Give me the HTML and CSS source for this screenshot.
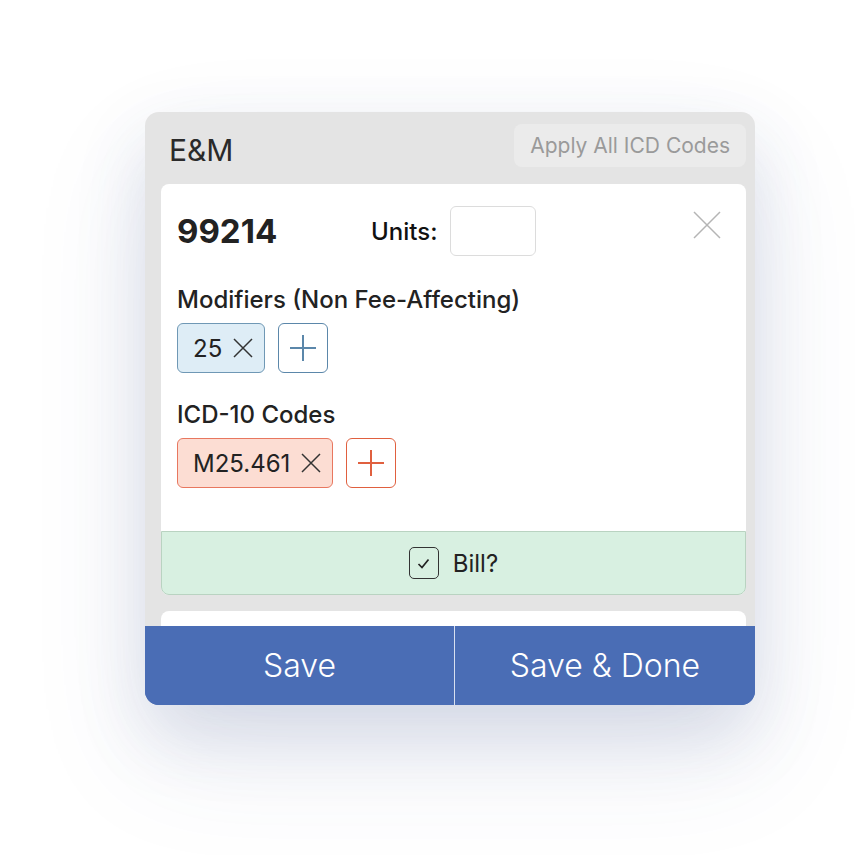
FILE: index.html
```html
<!DOCTYPE html>
<html lang="en">
<head>
<meta charset="UTF-8">
<meta name="viewport" content="width=device-width, initial-scale=1.0">
<title>E&amp;M Codes</title>
<link rel="stylesheet" href="styles.css">
</head>
<body>
<div class="panel">
    <div class="panel-header">
        <span class="panel-title">E&amp;M</span>
        <button class="apply-btn">Apply All ICD Codes</button>
    </div>
    <div class="panel-body">
        <div class="code-card">
            <div class="card-main">
                <div class="top-row">
                    <span class="code">99214</span>
                    <span class="units-label">Units:</span>
                    <input type="text" class="units-input">
                    <button class="close-btn">
                        <svg width="28" height="28" viewBox="0 0 28 28"><path d="M1 1 L27 27 M27 1 L1 27" stroke="#b5b5b5" stroke-width="1.5" fill="none"/></svg>
                    </button>
                </div>
                <div class="section-label">Modifiers (Non Fee-Affecting)</div>
                <div class="chips">
                    <span class="chip chip-blue">25
                        <svg width="20" height="20" viewBox="0 0 20 20"><path d="M1 1 L19 19 M19 1 L1 19" stroke="#333" stroke-width="1.5" fill="none"/></svg>
                    </span>
                    <button class="add-btn add-blue">
                        <svg width="26" height="26" viewBox="0 0 26 26"><path d="M13 0 V26 M0 13 H26" stroke="#5b87aa" stroke-width="2" fill="none"/></svg>
                    </button>
                </div>
                <div class="section-label">ICD-10 Codes</div>
                <div class="chips">
                    <span class="chip chip-red">M25.461
                        <svg width="20" height="20" viewBox="0 0 20 20"><path d="M1 1 L19 19 M19 1 L1 19" stroke="#333" stroke-width="1.5" fill="none"/></svg>
                    </span>
                    <button class="add-btn add-red">
                        <svg width="26" height="26" viewBox="0 0 26 26"><path d="M13 0 V26 M0 13 H26" stroke="#e0603f" stroke-width="2" fill="none"/></svg>
                    </button>
                </div>
            </div>
            <div class="bill-bar">
                <span class="checkbox">
                    <svg width="13" height="11" viewBox="0 0 13 11"><path d="M1.5 6 L5 9.5 L11.5 1.5" stroke="#222" stroke-width="1.7" fill="none"/></svg>
                </span>
                <span>Bill?</span>
            </div>
        </div>
        <div class="code-card next-card"></div>
    </div>
    <div class="panel-footer">
        <button class="footer-btn save">Save</button>
        <button class="footer-btn done">Save &amp; Done</button>
    </div>
</div>
</body>
</html>
```

FILE: styles.css
```css
html, body {
    height: 855px;
}
body {
    margin: 0;
    background: #ffffff;
    font-family: Inter, "Noto Sans", sans-serif;
    color: #222;
    overflow: hidden;
}
.panel {
    margin: 112px 0 0 145px;
    width: 610px;
    background: #e4e4e4;
    border-radius: 14px;
    overflow: hidden;
    box-shadow: 0 30px 70px rgba(60, 80, 140, 0.15), 0 50px 120px rgba(60, 80, 140, 0.1);
}
.panel-header {
    height: 72px;
    display: flex;
    justify-content: space-between;
    align-items: flex-start;
    padding: 12px 9px 0 24px;
    box-sizing: border-box;
}
.panel-title {
    font-size: 30px;
    font-weight: 400;
    margin-top: 8px;
    color: #2a2a2a;
}
.apply-btn {
    height: 43px;
    padding: 0 16px;
    border: none;
    border-radius: 8px;
    background: #ebebeb;
    color: #9a9a9a;
    font-family: inherit;
    font-size: 21px;
}
.panel-body {
    height: 442px;
    overflow: hidden;
    padding: 0 9px 0 16px;
}
.code-card {
    background: #ffffff;
    border-radius: 8px;
}
.card-main {
    padding: 22px 16px 43px;
}
.top-row {
    display: flex;
    align-items: center;
    height: 50px;
    padding-bottom: 2px;
}
.code {
    width: 194px;
    font-size: 33px;
    font-weight: 700;
}
.units-label {
    font-size: 24px;
    font-weight: 500;
    margin-right: 13px;
    color: #111;
}
.units-input {
    width: 86px;
    height: 50px;
    box-sizing: border-box;
    border: 1px solid #dcdcdc;
    border-radius: 6px;
}
.close-btn {
    margin-left: auto;
    margin-right: 9px;
    margin-top: -12px;
    border: none;
    background: none;
    padding: 0;
    display: flex;
}
.section-label {
    font-size: 24px;
    font-weight: 500;
    margin: 27px 0 9px;
    line-height: 29px;
}
.chips {
    display: flex;
    gap: 13px;
}
.chip {
    height: 50px;
    box-sizing: border-box;
    display: flex;
    align-items: center;
    gap: 11px;
    padding: 0 11px 0 15px;
    border-radius: 6px;
    font-size: 24px;
}
.chip-blue {
    background: #deedf6;
    border: 1.5px solid #6f98b5;
}
.chip-red {
    background: #fcddd3;
    border: 1.5px solid #e8775f;
}
.add-btn {
    width: 50px;
    height: 50px;
    box-sizing: border-box;
    background: #ffffff;
    border-radius: 6px;
    display: flex;
    align-items: center;
    justify-content: center;
    padding: 0;
}
.add-blue {
    border: 1.5px solid #5b87aa;
}
.add-red {
    border: 1.5px solid #e0603f;
}
.bill-bar {
    height: 64px;
    box-sizing: border-box;
    background: #d8f0e1;
    border: 1px solid #b9d3c1;
    border-radius: 0 0 8px 8px;
    display: flex;
    align-items: center;
    justify-content: center;
    gap: 14px;
    font-size: 24px;
}
.checkbox {
    width: 30px;
    height: 32px;
    box-sizing: border-box;
    border: 1.5px solid #333;
    border-radius: 5px;
    display: flex;
    align-items: center;
    justify-content: center;
}
.next-card {
    margin-top: 16px;
    height: 60px;
}
.panel-footer {
    display: flex;
    height: 79px;
    background: #4a6db5;
}
.footer-btn {
    border: none;
    background: #4a6db5;
    color: #ffffff;
    font-family: inherit;
    font-size: 32px;
    font-weight: 300;
}
.save {
    width: 309px;
}
.done {
    flex: 1;
    border-left: 1px solid #d8e0f0;
}
```
